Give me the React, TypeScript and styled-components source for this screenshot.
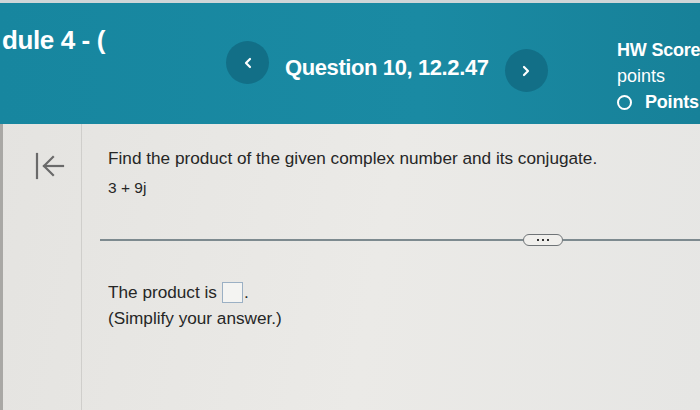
import React from 'react';
import styled, { createGlobalStyle } from 'styled-components';

const GlobalStyle = createGlobalStyle`
  html, body {
    margin: 0;
    padding: 0;
    width: 700px;
    height: 410px;
    overflow: hidden;
    background: #e6e5e2;
    font-family: "Liberation Sans", Arial, sans-serif;
  }
`;

const Page = styled.div`
  width: 700px;
  height: 410px;
  display: flex;
  flex-direction: column;
  background: linear-gradient(100deg, #e4e3e0 0%, #ebeae7 55%, #e6e6e4 100%);
`;

const Header = styled.header`
  height: 124px;
  flex-shrink: 0;
  background: linear-gradient(90deg, #17869f 0%, #1a8aa3 60%, #178199 100%);
  display: flex;
  align-items: flex-start;
  color: #fff;
  box-sizing: border-box;
  border-top: 3px solid #cfd6d8;
`;

const ModuleTitle = styled.div`
  font-size: 26px;
  font-weight: 700;
  width: 224px;
  padding: 22px 0 0 2px;
  white-space: nowrap;
  letter-spacing: -0.4px;
`;

const NavGroup = styled.div`
  display: flex;
  align-items: flex-start;
  padding-top: 38px;
`;

const NavButton = styled.div<{ $offset?: number }>`
  width: 43px;
  height: 43px;
  border-radius: 50%;
  background: #126f87;
  display: flex;
  align-items: center;
  justify-content: center;
  margin-top: ${p => p.$offset ?? 0}px;
  flex-shrink: 0;
`;

const QuestionTitle = styled.div`
  font-size: 22px;
  font-weight: 700;
  letter-spacing: -0.4px;
  white-space: nowrap;
  margin: 14px 16px 0 16px;
`;

const ScoreBox = styled.div`
  margin-left: auto;
  width: 83px;
  padding-top: 34px;
  display: flex;
  flex-direction: column;
  font-size: 18px;
  line-height: 26px;
  white-space: nowrap;
  overflow: hidden;
`;

const ScoreTitle = styled.div`
  font-weight: 700;
  letter-spacing: -0.2px;
`;

const PointsRow = styled.div`
  display: flex;
  align-items: center;
  gap: 13px;
  font-weight: 700;
  letter-spacing: -0.2px;
`;

const Radio = styled.span`
  width: 11px;
  height: 11px;
  border: 2px solid #fff;
  border-radius: 50%;
  flex-shrink: 0;
`;

const Body = styled.div`
  flex: 1;
  display: flex;
`;

const Sidebar = styled.aside`
  width: 82px;
  flex-shrink: 0;
  border-left: 3px solid #a9a8a5;
  border-right: 1px solid #cfcecb;
  box-sizing: border-box;
  display: flex;
  align-items: flex-start;
  padding: 28px 0 0 32px;
`;

const Content = styled.main`
  flex: 1;
  display: flex;
  flex-direction: column;
  padding: 24px 0 0 18px;
  color: #262626;
  font-size: 17.2px;
`;

const Prompt = styled.p`
  margin: 0 0 0 8px;
  line-height: 20px;
`;

const Expression = styled.p`
  margin: 10px 0 0 8px;
  font-size: 15.5px;
  line-height: 20px;
`;

const Divider = styled.div`
  display: flex;
  align-items: center;
  margin: 35px 0 0 0;
  height: 14px;
`;

const Rule = styled.div<{ $width?: number }>`
  height: 1.5px;
  background: #7d8a8f;
  flex: ${p => (p.$width ? `0 0 ${p.$width}px` : '1')};
`;

const MorePill = styled.div`
  width: 40px;
  height: 12px;
  border: 1.5px solid #6f7477;
  border-radius: 7px;
  box-sizing: border-box;
  display: flex;
  align-items: center;
  justify-content: center;
  gap: 3px;
  background: #f0efec;
`;

const Dot = styled.span`
  width: 2px;
  height: 2px;
  background: #333;
`;

const Answer = styled.div`
  margin: 32px 0 0 8px;
  line-height: 26px;
`;

const AnswerLine = styled.div`
  display: flex;
  align-items: center;
`;

const AnswerBox = styled.span`
  display: inline-block;
  width: 19px;
  height: 19px;
  border: 1px solid #9bb0c4;
  margin-left: 5px;
  margin-right: 1px;
  background: #f4f4f2;
`;

const ArrowBack = () => (
  <svg width="30" height="28" viewBox="0 0 30 28" fill="none" stroke="#6a6a6a" strokeWidth="2.2" strokeLinecap="square">
    <line x1="2" y1="2" x2="2" y2="26" />
    <line x1="9" y1="14" x2="28" y2="14" />
    <polyline points="18,5 9,14 18,23" fill="none" />
  </svg>
);

const Chevron = ({ dir }: { dir: 'left' | 'right' }) => (
  <svg width="10" height="12" viewBox="0 0 10 12" fill="none" stroke="#fff" strokeWidth="2.2" strokeLinecap="round" strokeLinejoin="round">
    {dir === 'left' ? <polyline points="7,2 3,6 7,10" /> : <polyline points="3,2 7,6 3,10" />}
  </svg>
);

export default function App() {
  return (
    <>
      <GlobalStyle />
      <Page>
        <Header>
          <ModuleTitle>dule 4 - (</ModuleTitle>
          <NavGroup>
            <NavButton>
              <Chevron dir="left" />
            </NavButton>
            <QuestionTitle>Question 10, 12.2.47</QuestionTitle>
            <NavButton $offset={8}>
              <Chevron dir="right" />
            </NavButton>
          </NavGroup>
          <ScoreBox>
            <ScoreTitle>HW Score</ScoreTitle>
            <div>points</div>
            <PointsRow>
              <Radio />
              Points
            </PointsRow>
          </ScoreBox>
        </Header>
        <Body>
          <Sidebar>
            <ArrowBack />
          </Sidebar>
          <Content>
            <Prompt>Find the product of the given complex number and its conjugate.</Prompt>
            <Expression>3 + 9j</Expression>
            <Divider>
              <Rule />
              <MorePill>
                <Dot />
                <Dot />
                <Dot />
              </MorePill>
              <Rule $width={137} />
            </Divider>
            <Answer>
              <AnswerLine>
                The product is <AnswerBox />.
              </AnswerLine>
              <div>(Simplify your answer.)</div>
            </Answer>
          </Content>
        </Body>
      </Page>
    </>
  );
}
